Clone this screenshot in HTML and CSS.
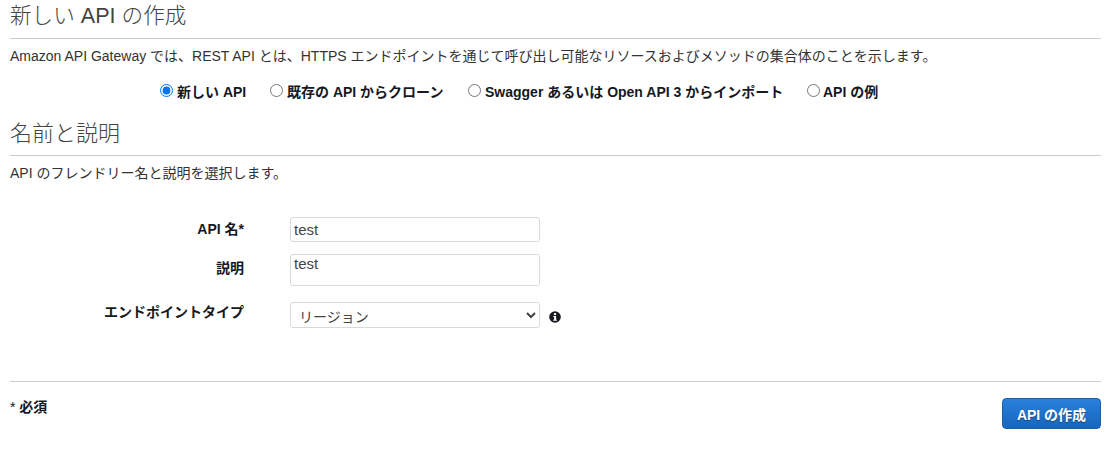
FILE: index.html
```html
<!DOCTYPE html>
<html lang="ja">
<head>
  <meta charset="UTF-8">
  <meta name="viewport" content="width=device-width, initial-scale=1.0">
  <title>新しい API の作成</title>
  <link rel="stylesheet" href="styles.css">
</head>
<body>

<div class="container">
  <!-- Create API -->
  <h2 class="section-title">新しい API の作成</h2>
  <p class="section-text">Amazon API Gateway では、REST API とは、HTTPS エンドポイントを通じて呼び出し可能なリソースおよびメソッドの集合体のことを示します。</p>

  <div class="radio-row">
    <label class="radio radio-new"><input type="radio" name="kind" checked>新しい API</label>
    <label class="radio radio-clone"><input type="radio" name="kind">既存の API からクローン</label>
    <label class="radio radio-import"><input type="radio" name="kind">Swagger あるいは Open API 3 からインポート</label>
    <label class="radio radio-sample"><input type="radio" name="kind">API の例</label>
  </div>

  <!-- Name and description -->
  <h2 class="section-title section-title-second">名前と説明</h2>
  <p class="section-text">API のフレンドリー名と説明を選択します。</p>

  <div class="form">
    <div class="form-row row-name">
      <label class="form-label" for="apiName">API 名*</label>
      <input class="field" id="apiName" type="text" value="test">
    </div>
    <div class="form-row row-desc">
      <label class="form-label" for="apiDesc">説明</label>
      <textarea class="field field-area" id="apiDesc">test</textarea>
    </div>
    <div class="form-row row-type">
      <label class="form-label" for="apiType">エンドポイントタイプ</label>
      <select class="field field-select" id="apiType">
        <option>リージョン</option>
      </select>
      <svg class="info-icon" viewBox="0 0 12 12" width="12" height="12" aria-hidden="true">
        <circle cx="6" cy="6" r="5.8" fill="#16191f"/>
        <rect x="4.9" y="2.1" width="2.2" height="1.9" fill="#fff"/>
        <path d="M4.3 5h2.8v3.7h.8v1H4.2v-1h.9V6h-.8z" fill="#fff"/>
      </svg>
    </div>
  </div>

  <div class="footer">
    <div class="required">* <b>必須</b></div>
    <button class="btn-create" type="button">API の作成</button>
  </div>
</div>

</body>
</html>
```

FILE: styles.css
```css
body {
  margin: 0;
  padding: 0;
  background-color: #fff;
  color: #16191f;
  font-family: "Liberation Sans", "Noto Sans CJK JP", sans-serif;
  font-size: 14px;
}

.container {
  padding: 0 6px 0 10px;
}

.section-title {
  margin: 0;
  height: 38px;
  line-height: 31px;
  font-size: 21.6px;
  font-weight: 300;
  color: #444;
  border-bottom: 1px solid #ccc;
}

.section-title-second {
  height: 39px;
  margin-top: 5px;
  line-height: 35px;
  font-size: 22px;
}

.section-text {
  margin: 0;
  height: 34px;
  line-height: 34px;
  font-size: 14px;
  color: #333;
}

.radio-row {
  display: flex;
  height: 38px;
  padding-left: 150px;
  padding-top: 2px;
  box-sizing: border-box;
  align-items: flex-start;
}

.radio {
  display: flex;
  align-items: center;
  height: 32px;
  font-size: 14px;
  font-weight: bold;
  color: #16191f;
}

.radio input {
  width: 13px;
  height: 13px;
  margin: 0 4px 2px 0;
}

.radio-new {
  width: 110px;
}

.radio-clone {
  width: 198px;
}

.radio-import {
  width: 339px;
}

.radio-sample {
  white-space: nowrap;
}

.radio-sample input {
  margin-right: 3px;
}

.form {
  padding-top: 27px;
}

.form-row {
  display: flex;
  align-items: flex-start;
}

.row-name {
  margin-bottom: 12px;
}

.row-desc {
  margin-bottom: 16px;
}

.form-label {
  width: 234px;
  margin-right: 46px;
  text-align: right;
  font-weight: bold;
  font-size: 14px;
  line-height: 25px;
}

.row-desc .form-label {
  line-height: 28px;
}

.row-type .form-label {
  line-height: 20px;
}

.field {
  box-sizing: border-box;
  width: 250px;
  height: 25px;
  padding: 0 3px;
  border: 1px solid #d5dbdb;
  border-radius: 3px;
  background-color: #fff;
  color: #444;
  font-family: "Liberation Sans", "Noto Sans CJK JP", sans-serif;
  font-size: 15px;
}

.field-area {
  height: 32px;
  line-height: 18px;
  resize: none;
  overflow: hidden;
  display: block;
}

.field-select {
  height: 26px;
  padding: 3px 4px 0;
  font-size: 14px;
}

.info-icon {
  margin: 9px 0 0 9px;
}

.footer {
  display: flex;
  justify-content: space-between;
  align-items: flex-start;
  margin-top: 53px;
  padding-top: 16px;
  border-top: 1px solid #ccc;
}

.required {
  font-size: 14px;
  line-height: 18px;
}

.btn-create {
  box-sizing: border-box;
  width: 99px;
  height: 31px;
  padding: 0;
  border: 1px solid #1a5fa8;
  border-radius: 4px;
  background: linear-gradient(#2a80dc, #1666ba);
  color: #fff;
  font-family: "Liberation Sans", "Noto Sans CJK JP", sans-serif;
  font-size: 14px;
  font-weight: bold;
  text-shadow: 0 1px 1px rgba(0, 0, 0, 0.4);
}
```
